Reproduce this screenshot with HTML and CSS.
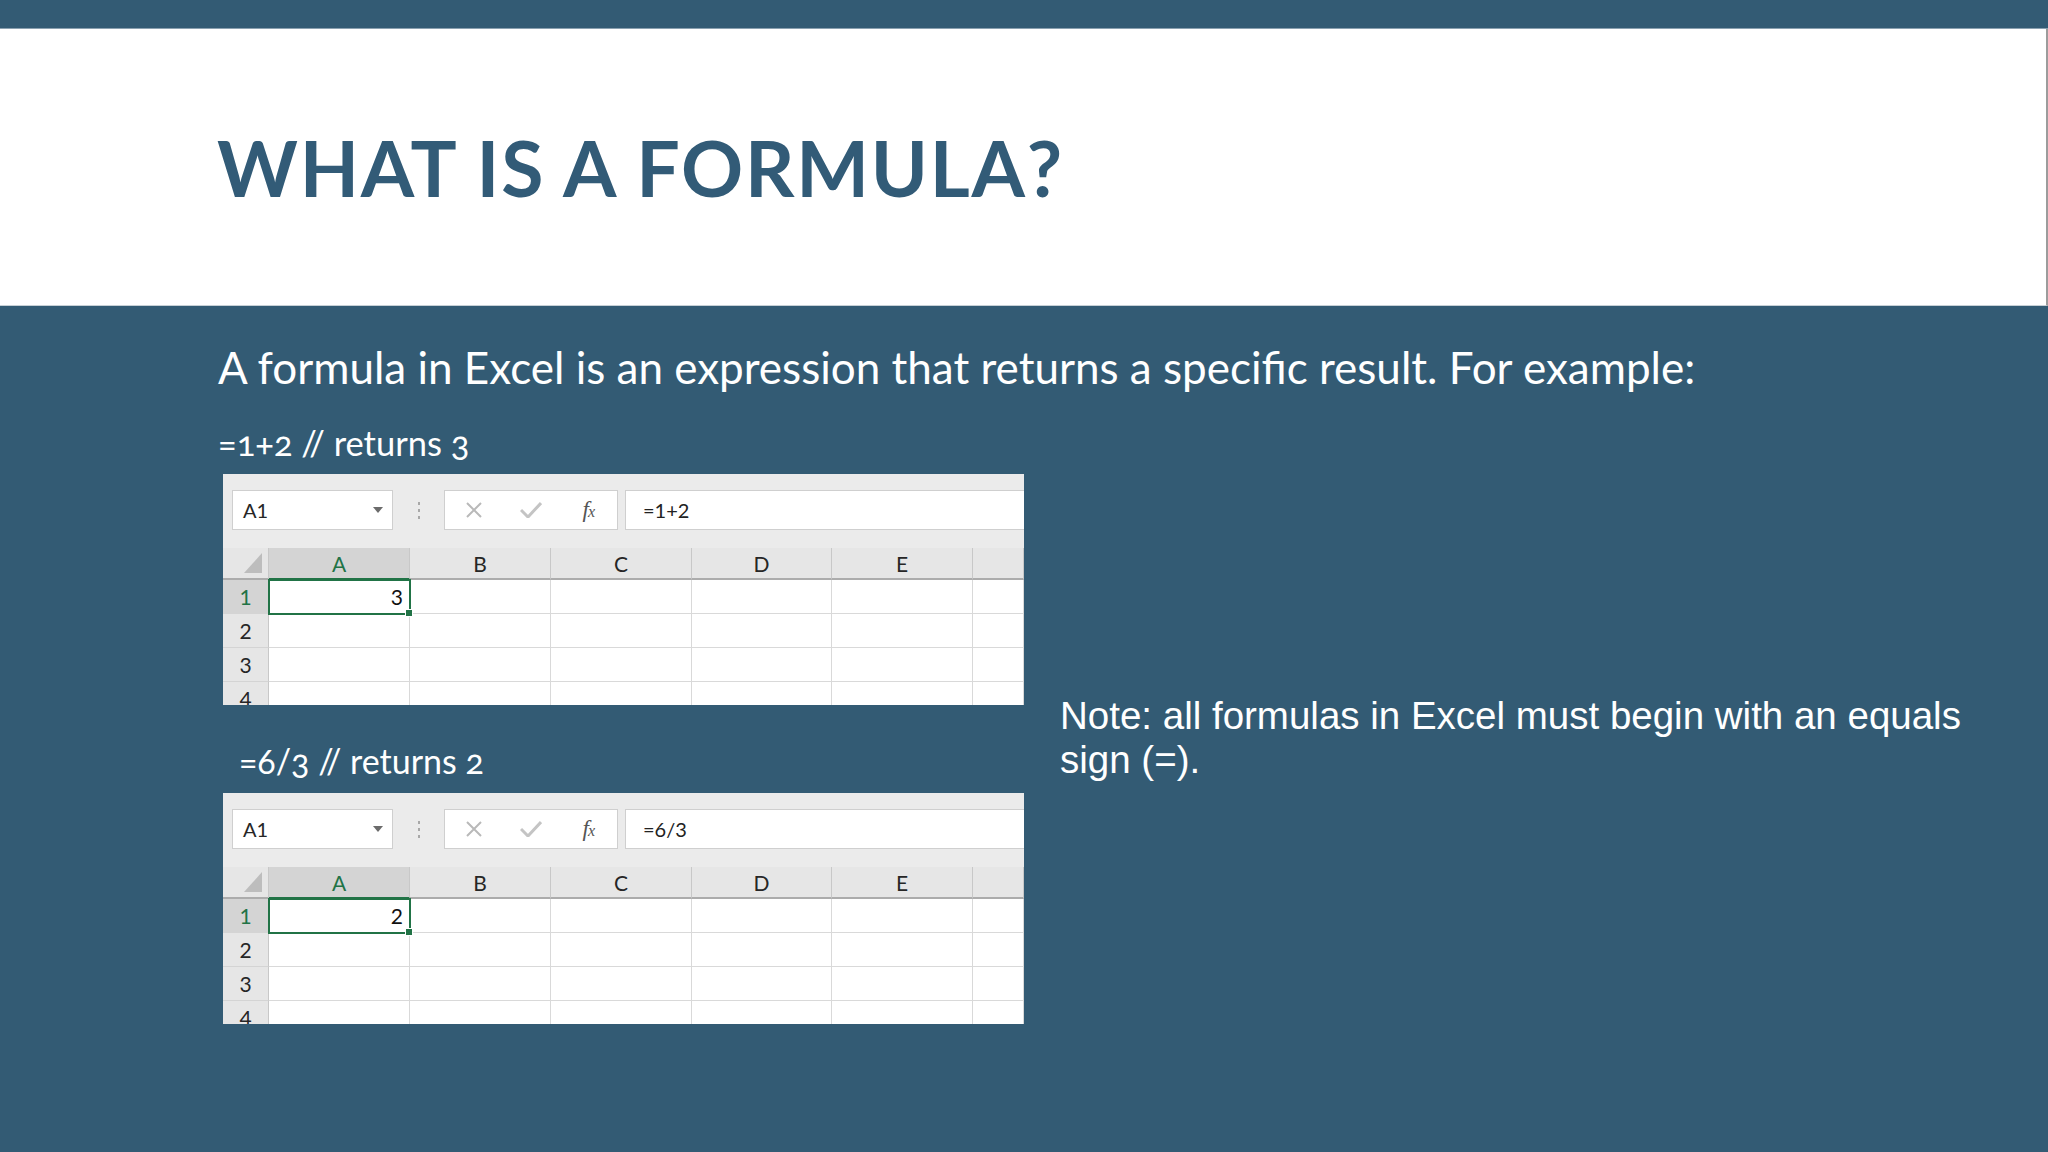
FILE: index.html
```html
<!DOCTYPE html>
<html lang="en">
<head>
<meta charset="utf-8">
<title>What is a formula?</title>
<link rel="stylesheet" href="styles.css">
</head>
<body>
<div class="slide">
  <div class="topbar"></div>
  <header class="header">
    <h1 class="title">WHAT IS A FORMULA?</h1>
  </header>
  <main class="content">
    <p class="intro">A formula in Excel is an expression that returns a specific result. For example:</p>
    <div class="row">
      <div class="examples">
        <p class="label">=1+2 // returns 3</p>
        <div class="xl">
          <div class="xl-bar">
            <div class="namebox"><span>A1</span><svg class="dd" width="10" height="6" viewBox="0 0 10 6"><path d="M0 0H10L5 6Z" fill="#6b6b6b"/></svg></div>
            <div class="sep"><i></i><i></i><i></i></div>
            <div class="fbtns">
              <svg class="ic" width="18" height="16" viewBox="0 0 18 16"><path d="M2 1L16 15M16 1L2 15" stroke="#b9b9b9" stroke-width="2" fill="none"/></svg>
              <svg class="ic" width="22" height="16" viewBox="0 0 22 16"><path d="M1 8L8 15L21 1" stroke="#c4c4c4" stroke-width="3" fill="none"/></svg>
              <span class="fx">f<span class="fxx">x</span></span>
            </div>
            <div class="finput">=1+2</div>
          </div>
          <div class="xl-grid">
            <div class="corner"><svg width="18" height="20" viewBox="0 0 18 20"><path d="M18 0V20H0Z" fill="#bdbdbd"/></svg></div>
            <div class="ch on">A</div><div class="ch">B</div><div class="ch">C</div><div class="ch">D</div><div class="ch">E</div><div class="ch"></div>
            <div class="rh on">1</div><div class="cell active">3</div><div class="cell"></div><div class="cell"></div><div class="cell"></div><div class="cell"></div><div class="cell"></div>
            <div class="rh">2</div><div class="cell"></div><div class="cell"></div><div class="cell"></div><div class="cell"></div><div class="cell"></div><div class="cell"></div>
            <div class="rh">3</div><div class="cell"></div><div class="cell"></div><div class="cell"></div><div class="cell"></div><div class="cell"></div><div class="cell"></div>
            <div class="rh">4</div><div class="cell"></div><div class="cell"></div><div class="cell"></div><div class="cell"></div><div class="cell"></div><div class="cell"></div>
          </div>
        </div>
        <p class="label label2">=6/3 // returns 2</p>
        <div class="xl">
          <div class="xl-bar">
            <div class="namebox"><span>A1</span><svg class="dd" width="10" height="6" viewBox="0 0 10 6"><path d="M0 0H10L5 6Z" fill="#6b6b6b"/></svg></div>
            <div class="sep"><i></i><i></i><i></i></div>
            <div class="fbtns">
              <svg class="ic" width="18" height="16" viewBox="0 0 18 16"><path d="M2 1L16 15M16 1L2 15" stroke="#b9b9b9" stroke-width="2" fill="none"/></svg>
              <svg class="ic" width="22" height="16" viewBox="0 0 22 16"><path d="M1 8L8 15L21 1" stroke="#c4c4c4" stroke-width="3" fill="none"/></svg>
              <span class="fx">f<span class="fxx">x</span></span>
            </div>
            <div class="finput">=6/3</div>
          </div>
          <div class="xl-grid">
            <div class="corner"><svg width="18" height="20" viewBox="0 0 18 20"><path d="M18 0V20H0Z" fill="#bdbdbd"/></svg></div>
            <div class="ch on">A</div><div class="ch">B</div><div class="ch">C</div><div class="ch">D</div><div class="ch">E</div><div class="ch"></div>
            <div class="rh on">1</div><div class="cell active">2</div><div class="cell"></div><div class="cell"></div><div class="cell"></div><div class="cell"></div><div class="cell"></div>
            <div class="rh">2</div><div class="cell"></div><div class="cell"></div><div class="cell"></div><div class="cell"></div><div class="cell"></div><div class="cell"></div>
            <div class="rh">3</div><div class="cell"></div><div class="cell"></div><div class="cell"></div><div class="cell"></div><div class="cell"></div><div class="cell"></div>
            <div class="rh">4</div><div class="cell"></div><div class="cell"></div><div class="cell"></div><div class="cell"></div><div class="cell"></div><div class="cell"></div>
          </div>
        </div>
      </div>
      <p class="note">Note: all formulas in Excel must begin with an equals sign (=).</p>
    </div>
  </main>
</div>
</body>
</html>
```
FILE: styles.css
```css
html, body {
  margin: 0;
  padding: 0;
}
body {
  width: 2048px;
  height: 1152px;
  overflow: hidden;
  background: #335b74;
  font-family: Lato, "Liberation Sans", sans-serif;
}
.slide {
  display: flex;
  flex-direction: column;
  height: 1152px;
}
.topbar {
  height: 29px;
  background: #335b74;
  border-bottom: 1px solid #8aa0b0;
  box-sizing: border-box;
}
.header {
  height: 277px;
  box-sizing: border-box;
  background: #fff;
  border-right: 2px solid #9c9c9c;
  border-bottom: 1px solid #c7d0d6;
  display: flex;
  align-items: center;
  padding-left: 217px;
}
.title {
  margin: 0;
  font-family: Lato, sans-serif;
  font-weight: 700;
  font-size: 77px;
  line-height: 1;
  color: #325b77;
  letter-spacing: 1.75px;
}
.content {
  flex: 1;
  background: #335b74;
  color: #fff;
  padding: 35px 0 0 218px;
}
.intro {
  margin: 0;
  font-size: 44px;
  line-height: 52px;
  font-weight: 400;
}
.row {
  display: flex;
  align-items: flex-start;
}
.examples {
  display: flex;
  flex-direction: column;
  width: 806px;
}
.label {
  margin: 30px 0 11px;
  font-size: 34.5px;
  line-height: 40px;
  font-variant-numeric: oldstyle-nums;
}
.label2 {
  margin: 36px 0 12px 21px;
  font-size: 34px;
}
.note {
  margin: 0 0 0 36px;
  padding-top: 301px;
  font-family: "Liberation Sans", Arial, sans-serif;
  font-size: 38.5px;
  line-height: 44px;
  width: 930px;
}

/* Excel screenshot */
.xl {
  margin-left: 5px;
  width: 801px;
  height: 231px;
  overflow: hidden;
  background: #ebebeb;
  font-family: Lato, "Liberation Sans", sans-serif;
  color: #262626;
  flex-shrink: 0;
}
.xl-bar {
  height: 74px;
  box-sizing: border-box;
  padding: 16px 0 0 9px;
  display: flex;
  align-items: flex-start;
}
.namebox {
  width: 161px;
  height: 40px;
  box-sizing: border-box;
  background: #fff;
  border: 1px solid #cfcfcf;
  display: flex;
  align-items: center;
  justify-content: space-between;
  padding: 0 9px 0 10px;
  font-size: 20px;
}
.sep {
  width: 51px;
  height: 40px;
  display: flex;
  flex-direction: column;
  align-items: center;
  justify-content: center;
  gap: 4px;
}
.sep i {
  display: block;
  width: 2px;
  height: 3px;
  background: #a8a8a8;
}
.fbtns {
  width: 174px;
  height: 40px;
  box-sizing: border-box;
  background: #fff;
  border: 1px solid #cfcfcf;
  display: grid;
  grid-template-columns: repeat(3, 1fr);
  align-items: center;
  justify-items: center;
}
.fx {
  font-family: "Liberation Serif", serif;
  font-style: italic;
  font-size: 23px;
  color: #555;
  letter-spacing: -1px;
}
.fxx {
  font-size: 16px;
}
.finput {
  flex: 1;
  margin-left: 7px;
  height: 40px;
  box-sizing: border-box;
  background: #fff;
  border: 1px solid #cfcfcf;
  border-right: none;
  display: flex;
  align-items: center;
  padding-left: 17px;
  font-size: 20px;
  color: #222;
}
.xl-grid {
  display: grid;
  grid-template-columns: 46px 141px 141px 141px 140px 141px 1fr;
  grid-template-rows: 32px 34px 34px 34px 34px;
  background: #fff;
}
.corner {
  background: #e6e6e6;
  border-right: 1px solid #c8c8c8;
  border-bottom: 2px solid #acacac;
  box-sizing: border-box;
  display: flex;
  align-items: flex-end;
  justify-content: flex-end;
  padding: 0 6px 5px 0;
}
.ch {
  background: #e6e6e6;
  border-right: 1px solid #c8c8c8;
  border-bottom: 2px solid #acacac;
  box-sizing: border-box;
  display: flex;
  align-items: center;
  justify-content: center;
  font-size: 21px;
}
.ch.on {
  background: #d4d4d4;
  color: #217346;
  border-bottom-color: #217346;
}
.rh {
  background: #e6e6e6;
  border-right: 1px solid #c8c8c8;
  border-bottom: 1px solid #d4d4d4;
  box-sizing: border-box;
  display: flex;
  align-items: center;
  justify-content: center;
  font-size: 21px;
}
.rh.on {
  background: #d4d4d4;
  color: #217346;
}
.cell {
  border-right: 1px solid #d9d9d9;
  border-bottom: 1px solid #d9d9d9;
  box-sizing: border-box;
  display: flex;
  align-items: center;
  justify-content: flex-end;
  padding-right: 6px;
  font-size: 21px;
  color: #111;
}
.cell.active {
  position: relative;
  outline: 2px solid #217346;
  outline-offset: -1px;
}
.cell.active::after {
  content: "";
  position: absolute;
  right: -4px;
  bottom: -4px;
  width: 6px;
  height: 6px;
  background: #217346;
  border: 1px solid #fff;
}
```
